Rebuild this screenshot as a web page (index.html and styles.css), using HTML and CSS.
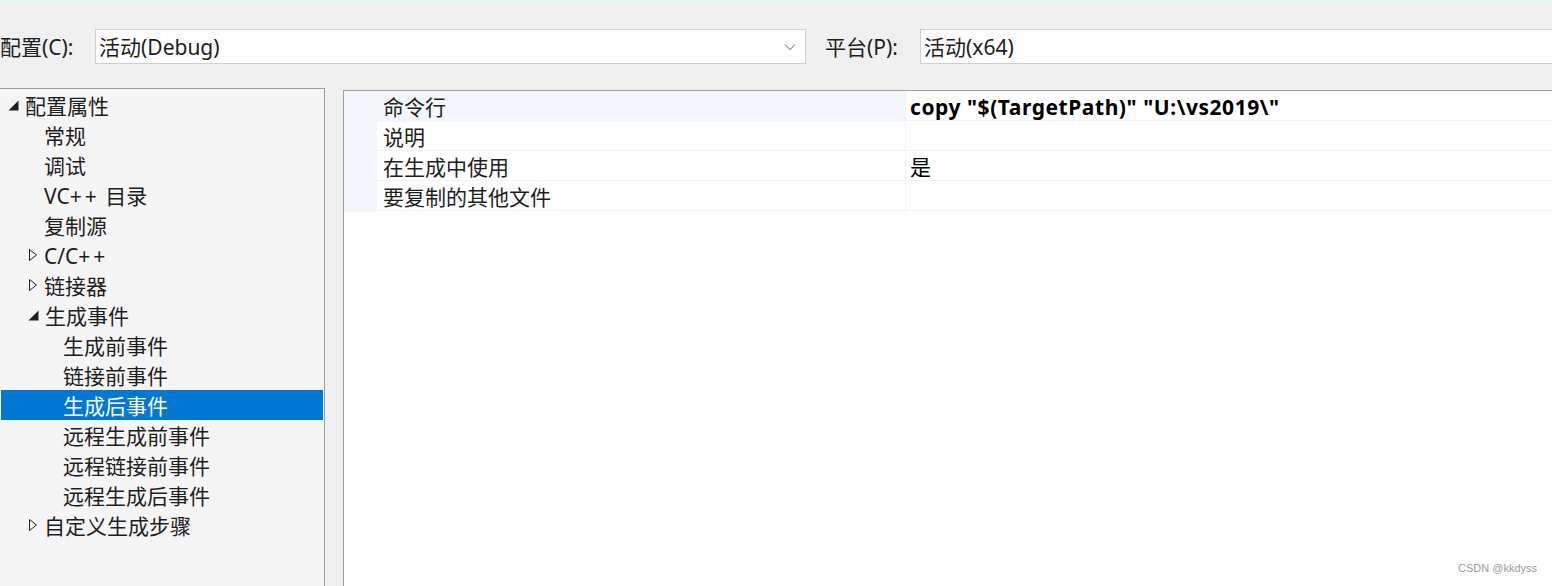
FILE: index.html
```html
<!DOCTYPE html>
<html lang="zh-CN">
<head>
<meta charset="utf-8">
<title>属性页</title>
<link rel="stylesheet" href="styles.css">
</head>
<body>
<div class="topstrip"></div>
<div class="toolbar">
  <label class="lbl lbl-config">配置(C):</label>
  <div class="combo combo-config">
    <span class="combo-text">活动(Debug)</span>
    <svg class="chev" width="12" height="8" viewBox="0 0 12 8"><path d="M1 1.5 L6 6.5 L11 1.5" fill="none" stroke="#606060" stroke-width="1"/></svg>
  </div>
  <label class="lbl lbl-platform">平台(P):</label>
  <div class="combo combo-platform">
    <span class="combo-text">活动(x64)</span>
  </div>
</div>
<div class="main">
  <div class="tree">
    <div class="node lvl0"><svg class="tri" width="11" height="11" viewBox="0 0 11 11"><path d="M10.5 0.5 L10.5 10.5 L0.5 10.5 Z" fill="#1e1e1e"/></svg><span>配置属性</span></div>
    <div class="node lvl1 leaf"><span>常规</span></div>
    <div class="node lvl1 leaf"><span>调试</span></div>
    <div class="node lvl1 leaf"><span>VC<span class="pp">++</span> 目录</span></div>
    <div class="node lvl1 leaf"><span>复制源</span></div>
    <div class="node lvl1"><svg class="tri" width="10" height="14" viewBox="0 0 10 14"><path d="M1.5 1.5 L8.5 7 L1.5 12.5 Z" fill="none" stroke="#1e1e1e" stroke-width="1"/></svg><span>C/C<span class="pp">++</span></span></div>
    <div class="node lvl1"><svg class="tri" width="10" height="14" viewBox="0 0 10 14"><path d="M1.5 1.5 L8.5 7 L1.5 12.5 Z" fill="none" stroke="#1e1e1e" stroke-width="1"/></svg><span>链接器</span></div>
    <div class="node lvl1"><svg class="tri" width="11" height="11" viewBox="0 0 11 11"><path d="M10.5 0.5 L10.5 10.5 L0.5 10.5 Z" fill="#1e1e1e"/></svg><span>生成事件</span></div>
    <div class="node lvl2"><span>生成前事件</span></div>
    <div class="node lvl2"><span>链接前事件</span></div>
    <div class="node lvl2 selected"><span>生成后事件</span></div>
    <div class="node lvl2"><span>远程生成前事件</span></div>
    <div class="node lvl2"><span>远程链接前事件</span></div>
    <div class="node lvl2"><span>远程生成后事件</span></div>
    <div class="node lvl1"><svg class="tri" width="10" height="14" viewBox="0 0 10 14"><path d="M1.5 1.5 L8.5 7 L1.5 12.5 Z" fill="none" stroke="#1e1e1e" stroke-width="1"/></svg><span>自定义生成步骤</span></div>
  </div>
  <div class="grid-panel">
    <div class="prop-grid">
      <div class="prow active">
        <div class="margin"></div>
        <div class="pname">命令行</div>
        <div class="pvalue bold">copy "$(TargetPath)" "U:\vs2019\"</div>
      </div>
      <div class="prow">
        <div class="margin"></div>
        <div class="pname">说明</div>
        <div class="pvalue"></div>
      </div>
      <div class="prow">
        <div class="margin"></div>
        <div class="pname">在生成中使用</div>
        <div class="pvalue">是</div>
      </div>
      <div class="prow">
        <div class="margin"></div>
        <div class="pname">要复制的其他文件</div>
        <div class="pvalue"></div>
      </div>
    </div>
  </div>
</div>
<div class="watermark">CSDN @kkdyss</div>
</body>
</html>
```
FILE: styles.css
```css
html, body {
  margin: 0;
  padding: 0;
  height: 100%;
  overflow: hidden;
}
body {
  background: #f0f0f0;
  font-family: "Noto Sans", "Noto Sans CJK SC", sans-serif;
  font-size: 21px;
  color: #1e1e1e;
  position: relative;
}
.topstrip {
  height: 4px;
  background: #e6f6f2;
}
.toolbar {
  display: flex;
  align-items: center;
  margin-top: 25px;
  height: 35px;
}
.lbl {
  line-height: 35px;
  padding-top: 1px;
  white-space: nowrap;
}
.lbl-config {
  width: 95px;
  flex: none;
}
.lbl-platform {
  margin-left: 19px;
  width: 95px;
  flex: none;
}
.combo {
  box-sizing: border-box;
  height: 35px;
  background: #fdfdfd;
  border: 1px solid #d0d0d0;
  display: flex;
  align-items: center;
  padding-left: 3px;
}
.combo-config {
  width: 711px;
  flex: none;
  justify-content: space-between;
  padding-right: 9px;
}
.combo-platform {
  flex: 1;
  border-right: none;
}
.combo-text {
  line-height: 33px;
  padding-top: 1px;
  white-space: nowrap;
}
.chev {
  display: block;
}
.pp {
  letter-spacing: 3px;
}
.main {
  display: flex;
  align-items: flex-start;
  margin-top: 24px;
  gap: 18px;
}
.tree {
  box-sizing: border-box;
  width: 325px;
  flex: none;
  height: 500px;
  background: #f5f5f5;
  border-top: 1px solid #a0a0a0;
  border-right: 1px solid #a0a0a0;
  padding-top: 1px;
}
.node {
  height: 30px;
  display: flex;
  align-items: center;
  line-height: 30px;
  white-space: nowrap;
}
.node > span {
  padding-top: 2px;
}
.node .tri {
  flex: none;
  margin-right: 6px;
}
.lvl0 { padding-left: 8px; }
.lvl0 .tri { margin-right: 6px; }
.lvl1 { padding-left: 28px; }
.lvl1.leaf { padding-left: 44px; }
.lvl2 { padding-left: 63px; }
.node.selected {
  background: #0078d4;
  color: #ffffff;
  margin-left: 1px;
  margin-right: 1px;
  padding-left: 62px;
}
.grid-panel {
  flex: 1;
  box-sizing: border-box;
  height: 500px;
  margin-top: 2px;
  background: #ffffff;
  border-top: 1px solid #a0a0a0;
  border-left: 1px solid #a0a0a0;
}
.prop-grid {
  display: flex;
  flex-direction: column;
}
.prow {
  display: grid;
  grid-template-columns: 33px 529px 1fr;
  height: 30px;
  box-sizing: border-box;
  border-bottom: 1px solid #f0f3f8;
}
.margin {
  background: #f3f6fb;
}
.pname {
  padding-left: 6px;
  padding-top: 1px;
  line-height: 30px;
  white-space: nowrap;
  border-right: 1px solid #f0f3f8;
}
.prow.active .pname {
  background: #f3f6fb;
}
.pvalue {
  padding-left: 4px;
  padding-top: 1px;
  line-height: 30px;
  white-space: nowrap;
  color: #000;
}
.pvalue.bold {
  font-weight: 700;
  letter-spacing: 0.55px;
}
.watermark {
  position: absolute;
  left: 1458px;
  top: 562px;
  font-family: "Liberation Sans", Arial, sans-serif;
  font-size: 11px;
  color: #9a9a9a;
}
```
